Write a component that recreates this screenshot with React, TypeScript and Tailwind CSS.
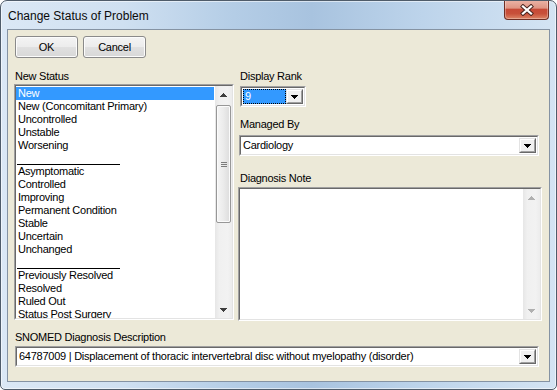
import React from "react";

const items: (string | null)[] = [
  "New",
  "New (Concomitant Primary)",
  "Uncontrolled",
  "Unstable",
  "Worsening",
  null,
  "Asymptomatic",
  "Controlled",
  "Improving",
  "Permanent Condition",
  "Stable",
  "Uncertain",
  "Unchanged",
  null,
  "Previously Resolved",
  "Resolved",
  "Ruled Out",
  "Status Post Surgery",
];

function UpArrow({ color }: { color: string }) {
  return (
    <svg width="7" height="4" viewBox="0 0 7 4" shapeRendering="crispEdges">
      <path d="M3 0h1v1h1v1h1v1h1v1H0V3h1V2h1V1h1z" fill={color} />
    </svg>
  );
}

function DownArrow({ color }: { color: string }) {
  return (
    <svg width="7" height="4" viewBox="0 0 7 4" shapeRendering="crispEdges">
      <path d="M0 0h7v1H6v1H5v1H4v1H3V3H2V2H1V1H0z" fill={color} />
    </svg>
  );
}

function VScroll({ thumb, arrow }: { thumb: boolean; arrow: string }) {
  return (
    <div className="w-[17px] h-full flex flex-col shrink-0 bg-[linear-gradient(90deg,#e6e6e6_0%,#f0f0f0_25%,#f2f2f2_75%,#ececec_100%)]">
      <div className="h-[17px] flex items-center justify-center shrink-0">
        <UpArrow color={arrow} />
      </div>
      <div className="flex-1 flex flex-col">
        {thumb && (
          <div className="mt-[2px] mx-[1px] h-[118px] rounded-[2px] border border-[#979797] bg-[linear-gradient(90deg,#f5f5f5_0%,#ebebeb_50%,#dcdcdc_100%)] shadow-[inset_0_0_0_1px_#fbfbfb] flex flex-col items-center justify-center gap-[1px]">
            <div className="w-[6px] h-[1px] bg-[#7c7c7c]" />
            <div className="w-[6px] h-[1px] bg-[#7c7c7c]" />
            <div className="w-[6px] h-[1px] bg-[#7c7c7c]" />
          </div>
        )}
      </div>
      <div className="h-[17px] flex items-center justify-center shrink-0">
        <DownArrow color={arrow} />
      </div>
    </div>
  );
}

function Sunken({ className, children }: { className: string; children: React.ReactNode }) {
  return (
    <div className={`border border-t-[#a0a0a0] border-l-[#a0a0a0] border-r-white border-b-white ${className}`}>
      <div className="w-full h-full border border-t-[#696969] border-l-[#696969] border-r-[#e3e3e3] border-b-[#e3e3e3] bg-white flex">
        {children}
      </div>
    </div>
  );
}

function DropBtn() {
  return (
    <div className="w-[17px] h-full shrink-0 border border-t-[#e3e3e3] border-l-[#e3e3e3] border-r-[#696969] border-b-[#696969] bg-[#f0f0f0]">
      <div className="w-full h-full border border-t-white border-l-white border-r-[#a0a0a0] border-b-[#a0a0a0] flex items-center justify-center">
        <DownArrow color="#000000" />
      </div>
    </div>
  );
}

function Combo({ className, children }: { className: string; children: React.ReactNode }) {
  return (
    <Sunken className={`h-[21px] ${className}`}>
      <div className="flex-1 flex p-[1px] min-w-0">
        <div className="flex-1 flex items-center min-w-0 whitespace-nowrap overflow-hidden">{children}</div>
        <DropBtn />
      </div>
    </Sunken>
  );
}

function Btn({ children }: { children: React.ReactNode }) {
  return (
    <div className="w-[63px] h-[22px] rounded-[3px] border border-[#8a8a8a] bg-[linear-gradient(180deg,#f4f4f4_0%,#ececec_50%,#e0e0e0_51%,#d8d8d8_100%)] shadow-[inset_0_0_0_1px_#fcfcfc] flex items-center justify-center text-[11px] leading-[13px]">
      {children}
    </div>
  );
}

function Label({ className, children }: { className: string; children: React.ReactNode }) {
  return <div className={`h-[13px] leading-[13px] text-[11px] whitespace-nowrap ${className}`}>{children}</div>;
}

export default function App() {
  return (
    <div className="w-[557px] h-[390px] bg-white">
      <div className="w-[557px] h-[390px] rounded-t-[7px] rounded-b-[5px] border border-[#4f5c6a] bg-[linear-gradient(90deg,#dbe8f5_0%,#cfe0f1_22%,#b4cde6_42%,#a8c3df_56%,#bdd4eb_76%,#d4e4f3_100%)] shadow-[inset_0_0_0_1px_rgba(255,255,255,0.55)] flex flex-col overflow-hidden font-['Liberation_Sans',Arial,sans-serif] text-black">
        <div className="h-[28px] shrink-0 flex items-start justify-between">
          <div className="ml-[7px] mt-[8px] text-[12px] leading-[15px] text-[#0b0b0b]">Change Status of Problem</div>
          <div className="mr-[7px] -mt-px w-[45px] h-[20px] rounded-b-[4px] border border-t-0 border-[#6e2e24] bg-[linear-gradient(180deg,#ecb5a8_0%,#df9584_42%,#c74a37_50%,#c8503a_72%,#dd8566_100%)] shadow-[inset_0_0_0_1px_rgba(255,255,255,0.3)] flex items-center justify-center">
            <svg width="14" height="12" viewBox="0 0 14 12">
              <path d="M3 2.5 L11 9.5 M11 2.5 L3 9.5" stroke="#4b2620" strokeWidth="4.2" strokeLinecap="square" />
              <path d="M3 2.5 L11 9.5 M11 2.5 L3 9.5" stroke="#ffffff" strokeWidth="2.3" strokeLinecap="square" />
            </svg>
          </div>
        </div>

        <div className="mx-[6px] h-[353px] shrink-0 border border-[#8593a3] bg-[#ece9d8] flex flex-col pl-[6px] pt-[6px] text-[11px] tracking-[-0.25px]">
          <div className="flex gap-[5px] ml-[1px]">
            <Btn>OK</Btn>
            <Btn>Cancel</Btn>
          </div>

          <div className="flex">
            <div className="w-[220px] flex flex-col">
              <Label className="mt-[12px] ml-[1px]">New Status</Label>
              <Sunken className="mt-[1px] w-[220px] h-[236px]">
                <div className="flex-1 overflow-hidden pt-[1px] pr-[1px] min-w-0">
                  {items.map((it, i) =>
                    it === null ? (
                      <div key={i} className="h-[13px] flex items-end">
                        <div className="ml-[1px] w-[103px] h-[1px] bg-black" />
                      </div>
                    ) : (
                      <div
                        key={i}
                        className={`h-[13px] leading-[13px] pl-[2px] whitespace-nowrap ${i === 0 ? "bg-[#3399ff] text-white" : "text-black"}`}
                      >
                        {it}
                      </div>
                    )
                  )}
                </div>
                <VScroll thumb={true} arrow="#3f3f3f" />
              </Sunken>
            </div>

            <div className="ml-[5px] flex flex-col">
              <Label className="mt-[12px] ml-[1px]">Display Rank</Label>
              <Combo className="mt-[3px] ml-[1px] w-[66px]">
                <div className="h-full w-full bg-[#3399ff] border border-dotted border-[#000] text-white leading-[13px] pl-[1px] flex items-center">9</div>
              </Combo>
              <Label className="mt-[11px] ml-[1px]">Managed By</Label>
              <Combo className="mt-[4px] w-[300px]">
                <span className="pl-[1px]">Cardiology</span>
              </Combo>
              <Label className="mt-[16px] ml-[1px]">Diagnosis Note</Label>
              <Sunken className="mt-[2px] -ml-[1px] w-[304px] h-[134px]">
                <div className="flex-1" />
                <VScroll thumb={false} arrow="#b0b0b0" />
              </Sunken>
            </div>
          </div>

          <Label className="mt-[10px] ml-[1px]">SNOMED Diagnosis Description</Label>
          <Combo className="mt-[2px] ml-[1px] w-[524px]">
            <span className="pl-[1px]">64787009 | Displacement of thoracic intervertebral disc without myelopathy (disorder)</span>
          </Combo>
        </div>
      </div>
    </div>
  );
}
